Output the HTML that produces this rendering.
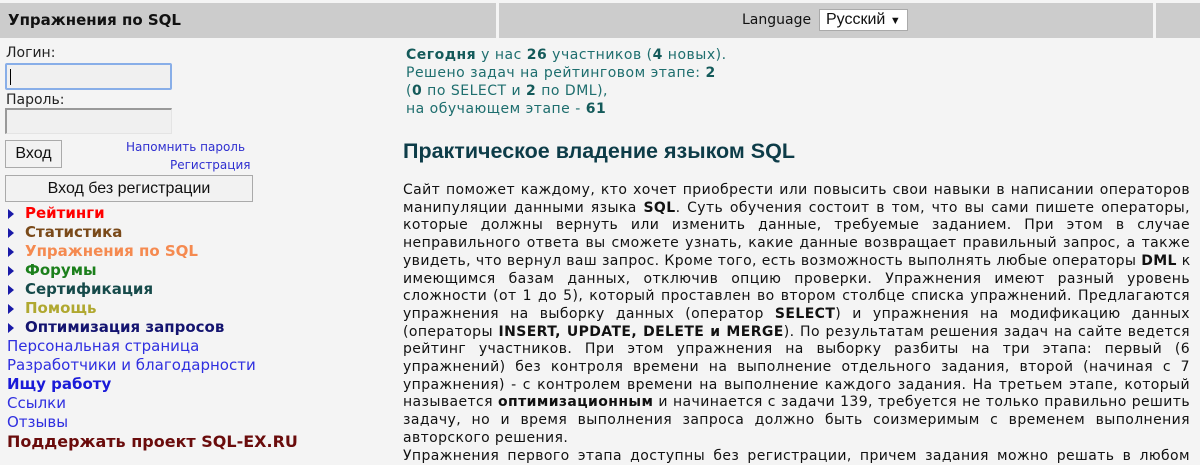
<!DOCTYPE html>
<html><head><meta charset="utf-8"><style>
body{margin:0;background:#f4f4f4;width:1200px;height:462px;overflow:hidden;position:relative;font-family:"DejaVu Sans",Verdana,sans-serif;}
.a{position:absolute;white-space:nowrap}
.hd{position:absolute;top:3px;height:35px;background:#cccccc}
.menu{position:absolute;left:7px;top:204px;font-size:15px;line-height:19px}
.menu div{white-space:nowrap}
.tri{display:inline-block;width:0;height:0;border-left:6px solid #1a1aa8;border-top:5px solid transparent;border-bottom:5px solid transparent;margin:0 11px 0 1px;vertical-align:-1px}
.b{font-weight:bold}
.txt{position:absolute;left:403px;top:182px;width:787px;font-size:14px;letter-spacing:0.4px;line-height:17.7px;color:#111}
.txt div{text-align:justify;text-align-last:justify;white-space:nowrap}
.txt div.l{text-align-last:left}
.st{position:absolute;left:406px;top:46px;font-size:14px;letter-spacing:0.5px;line-height:18px;color:#1e6e6e}
.st b{color:#145a5a}
</style></head><body>
<div class="hd" style="left:0;width:496px"></div>
<div class="hd" style="left:499px;width:654px"></div>
<div class="hd" style="left:1156px;width:44px"></div>
<div class="a b" style="left:8px;top:11px;font-size:15px;color:#111">Упражнения по SQL</div>
<div class="a" style="left:742px;top:12px;font-size:14px;color:#111">Language</div>
<div class="a" style="left:819px;top:9px;width:89px;height:22px;background:#fff;border:1px solid #aaa;box-sizing:border-box;font-family:'Liberation Sans',sans-serif;font-size:16px;line-height:20px;padding-left:6px;color:#111">Русский <span style="font-size:11px">▼</span></div>

<div class="a" style="left:6px;top:45px;font-size:14px;color:#222">Логин:</div>
<div class="a" style="left:5px;top:63px;width:167px;height:27px;border:2px solid #88aee8;box-sizing:border-box;background:#f0f0f0;border-radius:2px"><div style="position:absolute;left:3px;top:4px;width:1px;height:16px;background:#000"></div></div>
<div class="a" style="left:6px;top:92px;font-size:14px;color:#222">Пароль:</div>
<div class="a" style="left:5px;top:108px;width:167px;height:26px;border-top:2px solid #999;border-left:2px solid #999;border-right:1px solid #e4e4e4;border-bottom:1px solid #e4e4e4;box-sizing:border-box;background:#f0f0f0"></div>
<div class="a" style="left:5px;top:140px;width:57px;height:28px;border:1px solid #aaa;box-sizing:border-box;background:#f2f2f2;font-family:'Liberation Sans',sans-serif;font-size:16px;line-height:26px;text-align:center;color:#111">Вход</div>
<div class="a" style="left:126px;top:140px;font-size:12px;color:#2f2fd0">Напомнить пароль</div>
<div class="a" style="left:170px;top:158px;font-size:12px;color:#2f2fd0">Регистрация</div>
<div class="a" style="left:5px;top:175px;width:248px;height:27px;border:1px solid #aaa;box-sizing:border-box;background:#f2f2f2;font-family:'Liberation Sans',sans-serif;font-size:16px;line-height:25px;text-align:center;color:#111">Вход без регистрации</div>

<div class="menu">
<div class="b" style="color:#f00"><span class="tri"></span>Рейтинги</div>
<div class="b" style="color:#7a4a1a"><span class="tri"></span>Статистика</div>
<div class="b" style="color:#f58a50"><span class="tri"></span>Упражнения по SQL</div>
<div class="b" style="color:#1b7f1b"><span class="tri"></span>Форумы</div>
<div class="b" style="color:#164a4a"><span class="tri"></span>Сертификация</div>
<div class="b" style="color:#b0a830"><span class="tri"></span>Помощь</div>
<div class="b" style="color:#141470"><span class="tri"></span>Оптимизация запросов</div>
<div style="color:#2f2fe0">Персональная страница</div>
<div style="color:#2f2fe0">Разработчики и благодарности</div>
<div class="b" style="color:#1a1ad8">Ищу работу</div>
<div style="color:#2f2fe0">Ссылки</div>
<div style="color:#2f2fe0">Отзывы</div>
<div class="b" style="color:#6a0c0c;font-size:16px">Поддержать проект SQL-EX.RU</div>
</div>

<div class="st">
<div><b>Сегодня</b> у нас <b>26</b> участников (<b>4</b> новых).</div>
<div>Решено задач на рейтинговом этапе: <b>2</b></div>
<div>(<b>0</b> по SELECT и <b>2</b> по DML),</div>
<div>на обучающем этапе - <b>61</b></div>
</div>
<div class="a" style="left:403px;top:139px;font-family:'Liberation Sans',sans-serif;font-weight:bold;font-size:21.5px;color:#0d3c48">Практическое владение языком SQL</div>

<div class="txt">
<div>Сайт поможет каждому, кто хочет приобрести или повысить свои навыки в написании операторов</div>
<div>манипуляции данными языка <b>SQL</b>. Суть обучения состоит в том, что вы сами пишете операторы,</div>
<div>которые должны вернуть или изменить данные, требуемые заданием. При этом в случае</div>
<div>неправильного ответа вы сможете узнать, какие данные возвращает правильный запрос, а также</div>
<div>увидеть, что вернул ваш запрос. Кроме того, есть возможность выполнять любые операторы <b>DML</b> к</div>
<div>имеющимся базам данных, отключив опцию проверки. Упражнения имеют разный уровень</div>
<div>сложности (от 1 до 5), который проставлен во втором столбце списка упражнений. Предлагаются</div>
<div>упражнения на выборку данных (оператор <b>SELECT</b>) и упражнения на модификацию данных</div>
<div>(операторы <b>INSERT, UPDATE, DELETE и MERGE</b>). По результатам решения задач на сайте ведется</div>
<div>рейтинг участников. При этом упражнения на выборку разбиты на три этапа: первый (6</div>
<div>упражнений) без контроля времени на выполнение отдельного задания, второй (начиная с 7</div>
<div>упражнения) - с контролем времени на выполнение каждого задания. На третьем этапе, который</div>
<div>называется <b>оптимизационным</b> и начинается с задачи 139, требуется не только правильно решить</div>
<div>задачу, но и время выполнения запроса должно быть соизмеримым с временем выполнения</div>
<div class="l">авторского решения.</div>
<div>Упражнения первого этапа доступны без регистрации, причем задания можно решать в любом</div>
</div>
</body></html>
